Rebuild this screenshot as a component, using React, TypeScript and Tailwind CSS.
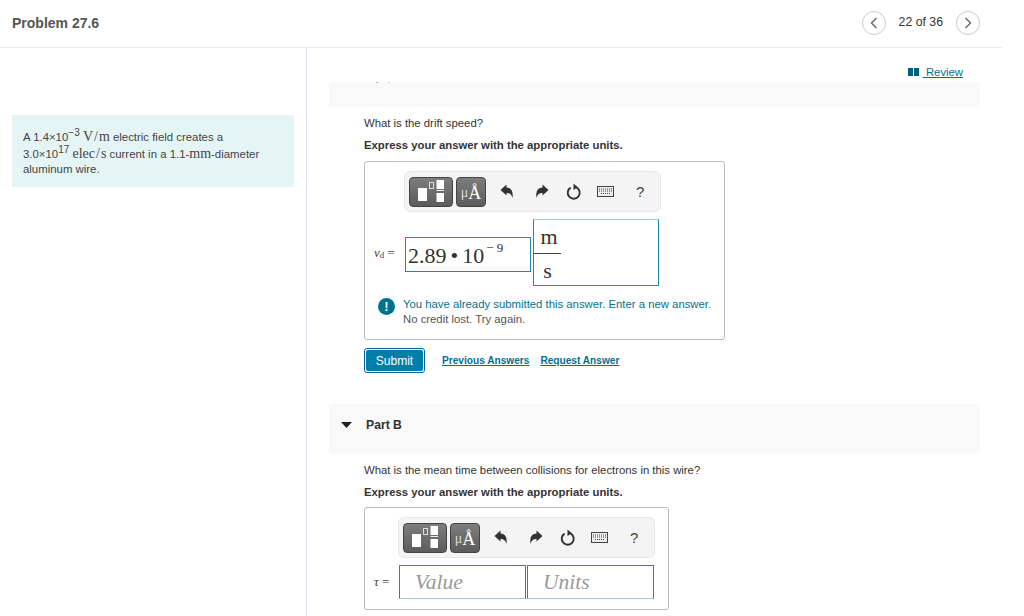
import React from 'react'

const serif = "font-['Liberation_Serif',serif]"

function MathToolbar({ className }: { className: string }) {
  return (
    <div className={`flex items-center h-[41px] w-[257px] rounded-md border border-[#e6e6e6] bg-[#f4f4f4] pl-[4px] ${className}`}>
      {/* Templates button */}
      <div className="flex items-center justify-center w-[44px] h-[30px] rounded-[4px] border border-[#444] bg-gradient-to-b from-[#7d7d7d] to-[#5c5c5c]">
        <svg width="28" height="24" viewBox="0 0 28 24">
          <rect x="1" y="8" width="9" height="13" fill="#fff" />
          <rect x="12.5" y="2.5" width="4" height="6" fill="none" stroke="#ddd" strokeWidth="1" />
          <rect x="19.5" y="0" width="7.5" height="9" fill="#fff" />
          <rect x="19.5" y="10" width="7.5" height="1" fill="#eee" />
          <rect x="19.5" y="13" width="7.5" height="9" fill="#fff" />
        </svg>
      </div>
      {/* Symbols button */}
      <div className={`ml-[3px] flex items-end justify-center w-[30px] h-[30px] rounded-[4px] border border-[#444] bg-gradient-to-b from-[#7d7d7d] to-[#5c5c5c] text-white pb-[3px] text-[18px] leading-[20px] ${serif}`}>
        <span className="text-[#ddd] text-[14px]">μ</span>Å
      </div>
      <svg className="ml-[14px]" width="14" height="15" viewBox="0 0 14 15">
        <path d="M0.5 6 L6.5 0.5 V3.5 C11 3.5 13.5 7 12.5 14 C11.5 10.5 10 9 6.5 9 V11.5 Z" fill="#333" />
      </svg>
      <svg className="ml-[21px]" width="14" height="15" viewBox="0 0 14 15">
        <path d="M13.5 6 L7.5 0.5 V3.5 C3 3.5 0.5 7 1.5 14 C2.5 10.5 4 9 7.5 9 V11.5 Z" fill="#333" />
      </svg>
      <svg className="ml-[17px]" width="16" height="17" viewBox="0 0 16 17">
        <path d="M10.5 4.4 A6 6 0 1 1 4.6 4.6" fill="none" stroke="#333" strokeWidth="1.9" />
        <path d="M7.5 0.5 L11.8 4.2 L7.5 7 Z" fill="#333" />
      </svg>
      <svg className="ml-[15px]" width="17" height="11" viewBox="0 0 17 11">
        <rect x="0.5" y="0.5" width="16" height="10" fill="#eee" stroke="#444" />
        <path d="M2 3h13M2 5h13M4 7.5h9" stroke="#444" strokeWidth="1" strokeDasharray="1 1" />
      </svg>
      <span className="ml-[22px] text-[15px] leading-none text-[#444] font-['Liberation_Sans',sans-serif]">?</span>
    </div>
  )
}

export default function App() {
  return (
    <div className="w-[1024px] h-[616px] overflow-hidden bg-white font-['Liberation_Sans',sans-serif] text-[#333]">
      <div className="w-[1002px]">
        {/* Header */}
        <div className="flex items-center justify-between h-[48px] border-b border-[#ececec] pl-[12px] pr-[22px]">
          <div className="text-[14px] font-bold text-[#555] mb-[1px]">Problem 27.6</div>
          <div className="flex items-center mb-[2px]">
            <div className="flex items-center justify-center w-[24px] h-[24px] rounded-full border border-[#ccc]">
              <svg width="10" height="12" viewBox="0 0 10 12"><path d="M7.5 1 L2.5 6 L7.5 11" fill="none" stroke="#666" strokeWidth="1.4" /></svg>
            </div>
            <span className="mx-[13px] text-[12.3px] text-[#333]">22 of 36</span>
            <div className="flex items-center justify-center w-[24px] h-[24px] rounded-full border border-[#ccc]">
              <svg width="10" height="12" viewBox="0 0 10 12"><path d="M2.5 1 L7.5 6 L2.5 11" fill="none" stroke="#666" strokeWidth="1.4" /></svg>
            </div>
          </div>
        </div>

        <div className="flex h-[568px]">
          {/* Problem statement */}
          <div className="w-[307px] shrink-0 border-r border-[#dde6ef] pt-[67px] pl-[12px] pr-[12px]">
            <div className="w-[282px] h-[72px] bg-[#e5f5f6] pl-[11px] pt-[14px] text-[11.4px] leading-[16px] text-[#444]">
              <div>A 1.4×10<sup className="text-[10px] leading-none">−3</sup> <span className={`${serif} text-[14px]`}>V<span className="mx-[1px]">/</span>m</span> electric field creates a</div>
              <div className="mt-[1px]">3.0×10<sup className="text-[10px] leading-none">17</sup> <span className={`${serif} text-[14px]`}>elec<span className="mx-[1px]">/</span>s</span> current in a 1.1-<span className={`${serif} text-[14px]`}>mm</span>-diameter</div>
              <div className="-mt-[1px]">aluminum wire.</div>
            </div>
          </div>

          {/* Parts */}
          <div className="flex-1 pl-[22px] pr-[22px]">
            <div className="flex justify-end items-center h-[18px] mt-[15px] mb-[1px] pr-[17px] text-[11.3px] text-[#00728f]">
              <svg width="11" height="8" viewBox="0 0 11 8" className="mr-[4px]">
                <rect x="0" y="0" width="5" height="8" fill="#005f7a" />
                <rect x="6" y="0" width="5" height="8" fill="#005f7a" />
              </svg>
              <span className="underline whitespace-pre"> Review</span>
            </div>
            <div className="h-[25px] bg-[#f9f9f9]">
              <div className="flex pl-[47px] gap-[10px]">
                <div className="w-[2px] h-[1px] bg-[#b5b5b5]" />
                <div className="w-[2px] h-[1px] bg-[#cfcfcf]" />
              </div>
            </div>

            <div className="pl-[35px]">
              <div className="mt-[9px] text-[11.33px] leading-[14px] text-[#333]">What is the drift speed?</div>
              <div className="mt-[8px] text-[11.33px] leading-[14px] font-bold text-[#333]">Express your answer with the appropriate units.</div>

              {/* Part A answer box */}
              <div className="mt-[9px] w-[361px] h-[179px] rounded-[3px] border border-[#bbb] pt-[9px]">
                <MathToolbar className="ml-[39px]" />
                <div className="flex ml-[9px] mt-[7px]">
                  <div className={`flex items-center h-[67px] w-[31px] text-[13px] text-[#444] ${serif}`}>
                    <i>v</i><sub className="text-[9px]">d</sub><span className="ml-[3px]">=</span>
                  </div>
                  <div className={`mt-[18px] flex items-center w-[126px] h-[35px] border border-[#1f8aa3] pl-[2px] pt-[1px] text-[22px] text-[#333] ${serif}`}>
                    2.89<span className="mx-[4px]">•</span>10<sup className="ml-[2px] text-[13px] leading-none -mt-[2px]">− 9</sup>
                  </div>
                  <div className={`ml-[2px] w-[126px] h-[67px] border border-[#1f8aa3] border-t-[#a2ced9] text-[22px] text-[#333] ${serif}`}>
                    <div className="w-[27px] text-center">
                      <div className="h-[34px] pt-[4px] pl-[3px] leading-[26px] border-b border-[#444]">m</div>
                      <div className="leading-[34px]">s</div>
                    </div>
                  </div>
                </div>
                <div className="flex ml-[13px] mt-[11px]">
                  <div className="mt-[1px] flex items-center justify-center w-[17px] h-[17px] rounded-full bg-[#00728f] text-white text-[13px] font-bold leading-none">!</div>
                  <div className="ml-[8px] text-[11.33px] leading-[15px]">
                    <div className="text-[#00728f]">You have already submitted this answer. Enter a new answer.</div>
                    <div className="text-[#555]">No credit lost. Try again.</div>
                  </div>
                </div>
              </div>

              <div className="flex items-center mt-[8px]">
                <div className="flex items-center justify-center w-[61px] h-[25px] rounded-[3px] border border-[#0a5f9e] p-[1px]">
                  <div className="flex items-center justify-center w-full h-full rounded-[2px] bg-[#007ea8] text-white text-[12px]">Submit</div>
                </div>
                <span className="ml-[17px] text-[10.15px] font-bold text-[#00728f] underline">Previous Answers</span>
                <span className="ml-[11px] text-[10.15px] font-bold text-[#00728f] underline">Request Answer</span>
              </div>
            </div>

            {/* Part B */}
            <div className="flex items-center h-[49px] mt-[31px] pb-[8px] bg-[#f9f9f9]">
              <svg width="11" height="6" viewBox="0 0 11 6" className="ml-[12px]"><path d="M0 0 H11 L5.5 6 Z" fill="#222" /></svg>
              <span className="ml-[14px] mt-[2px] text-[12.2px] font-bold text-[#333]">Part B</span>
            </div>
            <div className="pl-[35px]">
              <div className="mt-[10px] text-[11.33px] leading-[14px] text-[#333]">What is the mean time between collisions for electrons in this wire?</div>
              <div className="mt-[8px] text-[11.33px] leading-[14px] font-bold text-[#333]">Express your answer with the appropriate units.</div>

              <div className="mt-[8px] w-[305px] h-[103px] rounded-[3px] border border-[#bbb] pt-[9px]">
                <MathToolbar className="ml-[33px]" />
                <div className="flex items-center mt-[7px] ml-[9px]">
                  <div className={`w-[25px] text-[13px] text-[#444] ${serif}`}><i>τ</i> =</div>
                  <div className={`flex items-center w-[127px] h-[34px] border border-[#1f8aa3] border-b-[#a2ced9] pl-[15px] text-[21.5px] italic text-[#999] ${serif}`}>Value</div>
                  <div className={`ml-[1px] flex items-center w-[127px] h-[34px] border border-[#1f8aa3] border-b-[#a2ced9] pl-[15px] text-[21.5px] italic text-[#999] ${serif}`}>Units</div>
                </div>
              </div>
            </div>
          </div>
        </div>
      </div>
    </div>
  )
}
